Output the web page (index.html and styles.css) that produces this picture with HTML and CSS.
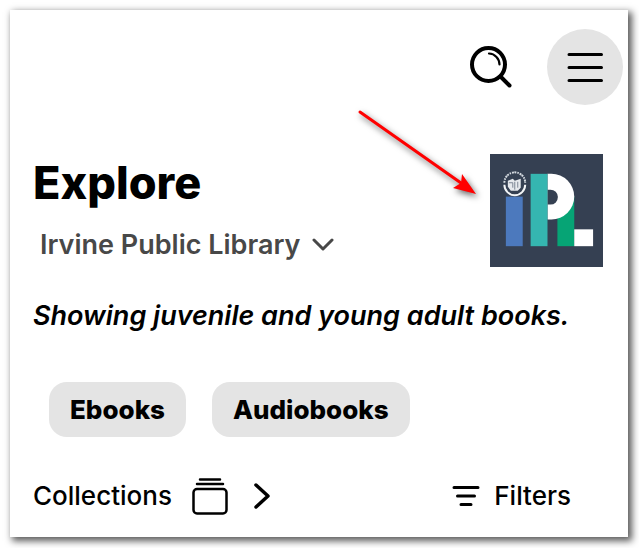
FILE: index.html
```html
<!DOCTYPE html>
<html lang="en">
<head>
<meta charset="utf-8">
<meta name="viewport" content="width=device-width, initial-scale=1">
<title>Explore</title>
<link rel="stylesheet" href="styles.css">
</head>
<body>
<main class="card">
  <header class="topbar">
    <button class="icon-button" type="button" aria-label="Search">
      <svg width="44" height="44" viewBox="0 0 44 44" fill="none" stroke="#000" stroke-linecap="round">
        <circle cx="19.500" cy="19.500" r="16.500" stroke-width="4"/>
        <path d="M20 8.500A11 11 0 0 1 30.500 19.500" stroke-width="2.200"/>
        <path d="M31.500 31.500L40.500 40.500" stroke-width="4"/>
      </svg>
    </button>
    <button class="icon-button menu-button" type="button" aria-label="Menu">
      <svg width="40" height="32" viewBox="0 0 40 32" stroke="#000" stroke-width="3" stroke-linecap="round">
        <path d="M4 3.500H36.500M4 16.500H36.500M4 29.500H36.500"/>
      </svg>
    </button>
  </header>

  <section class="intro">
    <div>
      <h1 class="title">Explore</h1>
      <button class="library" type="button">Irvine Public Library
        <svg width="22" height="14" viewBox="0 0 22 14" fill="none" stroke="#484848" stroke-width="3" stroke-linecap="round" stroke-linejoin="round"><path d="M2 2L11 11L20 2"/></svg>
      </button>
    </div>
    <div class="brand">
      <svg class="logo" viewBox="0 0 114 114" role="img" aria-label="Library logo">
        <rect width="114" height="114" fill="#354052"/>
        <rect x="16" y="43" width="17" height="50" fill="#4c79bd"/>
        <rect x="68" y="43" width="17" height="50" fill="#06a475"/>
        <path d="M58 20H62A23 23 0 0 1 62 66H58Z" fill="#fff"/>
        <path d="M58 36H61A7.500 7.500 0 0 1 61 51H58Z" fill="#354052"/>
        <rect x="41" y="20" width="17" height="73" fill="#35b6b0"/>
        <rect x="85" y="76" width="19" height="17" fill="#fff"/>
        <path d="M14.500 29A10.500 10.500 0 0 1 35.500 29" fill="none" stroke="#d5dae0" stroke-width="2" stroke-dasharray="2 1 1.500 1 2 .5"/>
        <path d="M14.500 31A10.500 10.500 0 0 0 35.500 31" fill="none" stroke="#f2f4f6" stroke-width="2"/>
        <path d="M18 27L23 25L25 27L31 25V34L28 37H21L18 33Z" fill="#e6e9ed"/>
        <path d="M19 29H23V34M25 28V36M28 28V34" fill="none" stroke="#7b8593"/>
      </svg>
      <svg class="arrow" width="132" height="98" viewBox="0 0 132 98" aria-hidden="true">
        <path d="M6 6L107 77" stroke="#f00" stroke-width="3" stroke-linecap="round"/>
        <path d="M122 88L99 82L107 77L108 68Z" fill="#f00"/>
      </svg>
    </div>
  </section>

  <p class="tagline">Showing juvenile and young adult books.</p>

  <nav class="formats" aria-label="Formats">
    <button class="pill" type="button">Ebooks</button>
    <button class="pill" type="button">Audiobooks</button>
  </nav>

  <div class="tools">
    <a class="tool collections" href="#collections">Collections
      <svg width="36" height="38" viewBox="0 0 36 38" fill="none" stroke="#000" stroke-width="2.500" stroke-linecap="round"><path d="M8 2.500H28M5 7H31"/><rect x="1.500" y="12" width="33" height="24.500" rx="3.500"/></svg>
      <svg width="22" height="28" viewBox="0 0 22 28" fill="none" stroke="#000" stroke-width="3.500" stroke-linecap="round" stroke-linejoin="round"><path d="M8 3L20 14L8 25"/></svg>
    </a>
    <button class="tool filters" type="button">
      <svg width="28" height="22" viewBox="0 0 28 22" stroke="#000" stroke-width="3" stroke-linecap="round"><path d="M2 2.500H26M5.500 11H22.500M9 19.500H19"/></svg>
      Filters
    </button>
  </div>
</main>
</body>
</html>
```
FILE: styles.css
```css
* {
  box-sizing: border-box;
}

body {
  margin: 0;
  padding: 10px 11px 11px 10px;
  background: #fff;
  color: #000;
  font-family: Inter, "Liberation Sans", sans-serif;
}

svg {
  display: block;
  flex: none;
}

button {
  padding: 0;
  border: 0;
  background: none;
  color: inherit;
  font: inherit;
  cursor: pointer;
}

.card {
  padding: 19px 5px 16px 23px;
  background: #fff;
  box-shadow: 3px 3px 7px 1px rgba(0, 0, 0, 0.65);
}

.topbar {
  display: flex;
  justify-content: flex-end;
  align-items: center;
  gap: 34px;
}

.icon-button {
  display: grid;
  place-items: center;
}

.menu-button {
  width: 76px;
  height: 76px;
  border-radius: 50%;
  background: #e4e4e4;
}

.intro {
  display: flex;
  justify-content: space-between;
  margin-top: 49px;
  padding-right: 20px;
}

.title {
  margin: 0;
  font-size: 45px;
  line-height: 58px;
  font-weight: 800;
}

.library {
  display: flex;
  align-items: center;
  gap: 12px;
  margin-top: 13px;
  padding-left: 7px;
  color: #484848;
  font-size: 27px;
  line-height: 40px;
  font-weight: 600;
}

.brand {
  position: relative;
  width: 113px;
  height: 113px;
}

.logo {
  width: 100%;
}

.arrow {
  position: absolute;
  top: -48px;
  right: 117px;
  filter: drop-shadow(2px 3px 3px rgba(0, 0, 0, 0.6));
}

.tagline {
  margin: 29px 0 0;
  font-size: 27px;
  line-height: 40px;
  font-style: italic;
  font-weight: 600;
}

.formats {
  display: flex;
  gap: 26px;
  margin-top: 46px;
  padding-left: 16px;
}

.pill {
  height: 55px;
  padding: 0 21px;
  border-radius: 18px;
  background: #e4e4e4;
  font-size: 26px;
  font-weight: 800;
}

.tools {
  display: flex;
  justify-content: space-between;
  margin-top: 34px;
  padding-right: 52px;
}

.tool {
  display: flex;
  align-items: center;
  color: #000;
  font-size: 26px;
  line-height: 50px;
  font-weight: 500;
  text-decoration: none;
}

.collections {
  gap: 20px;
}

.filters {
  gap: 14px;
}
```
